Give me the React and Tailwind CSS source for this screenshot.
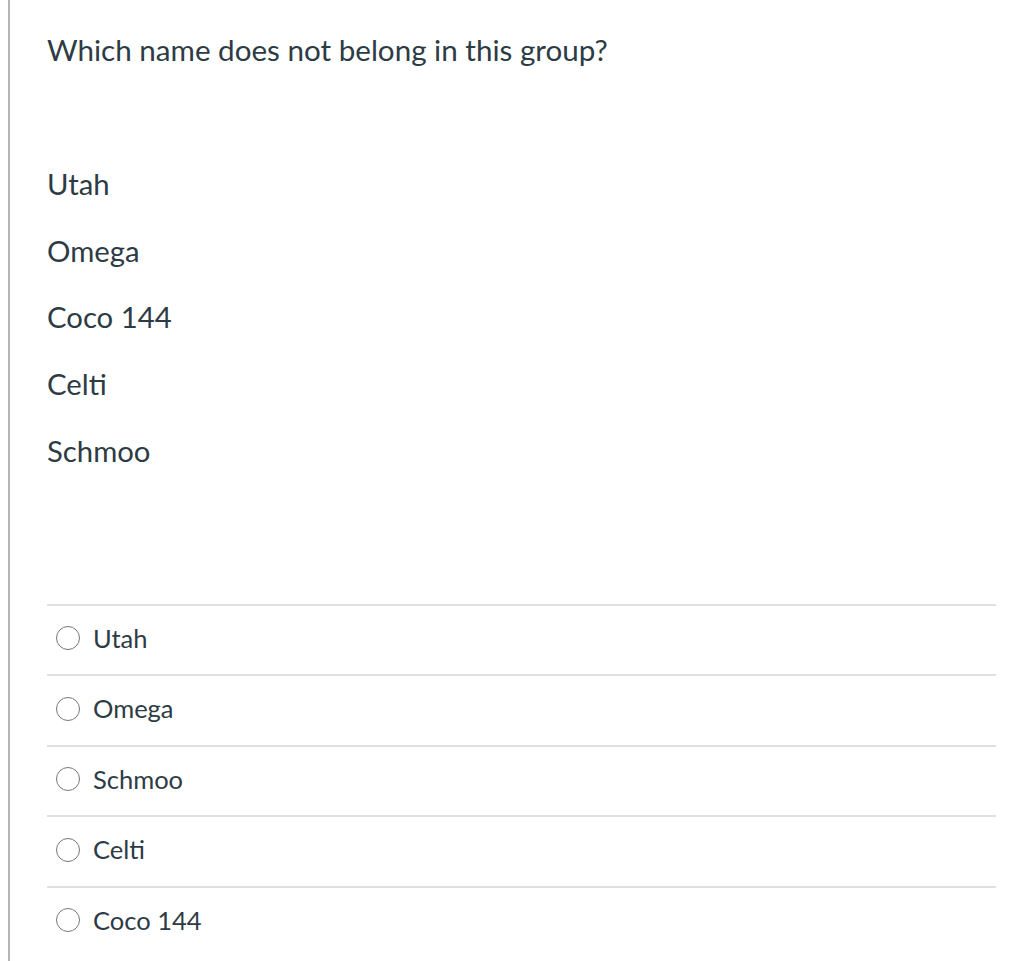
import React from 'react';

const names = ['Utah', 'Omega', 'Coco 144', 'Celti', 'Schmoo'];
const answers = ['Utah', 'Omega', 'Schmoo', 'Celti', 'Coco 144'];

const App = () => {
  return (
    <div className="min-h-screen bg-white pl-2 text-[#2d3b45]" style={{ fontFamily: 'Lato, "Noto Sans", sans-serif' }}>
      <div className="min-h-screen border-l-2 border-[#b5b5b5] pl-[37px] pr-[28px] pt-[31px]">
        <p className="text-[29.6px] leading-[38px]">Which name does not belong in this group?</p>

        <div className="mt-[96px] flex flex-col gap-[28.7px]">
          {names.map(n => (
            <p key={n} className="text-[29.3px] leading-[38px]">{n}</p>
          ))}
        </div>

        <div className="mt-[134px]">
          {answers.map(a => (
            <label key={a} className="flex h-[70.5px] items-center gap-[13px] border-t-2 border-[#e0e0e0] pb-[4px] pl-[9px]">
              <span className="h-[24px] w-[24px] rounded-full border-[1.5px] border-[#777]"></span>
              <span className="text-[25.5px]">{a}</span>
            </label>
          ))}
        </div>
      </div>
    </div>
  );
};

export default App;
